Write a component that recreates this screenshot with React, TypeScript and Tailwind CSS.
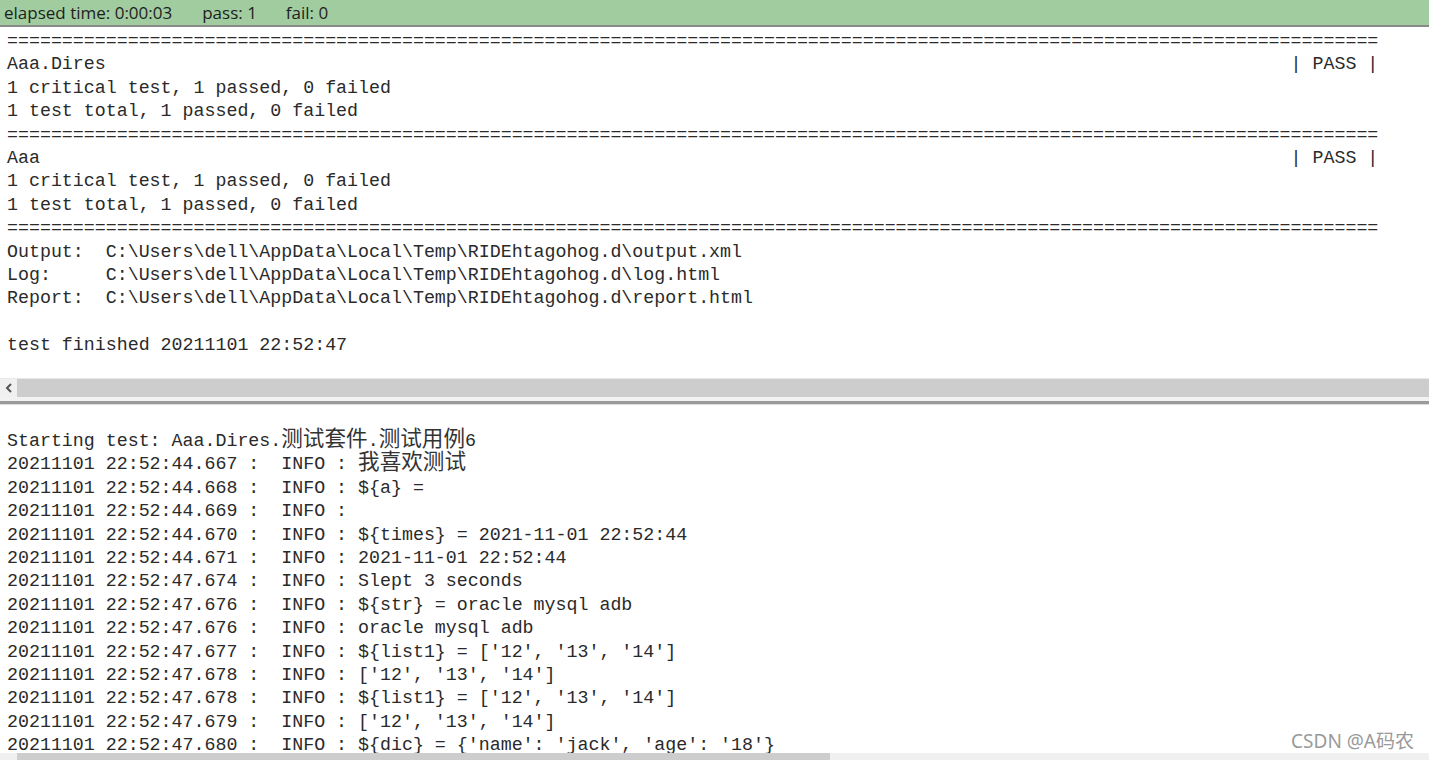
import React from "react";

const eq = "=".repeat(125);

const topLines: string[] = [
  eq,
  "Aaa.Dires".padEnd(117) + "| PASS |",
  "1 critical test, 1 passed, 0 failed",
  "1 test total, 1 passed, 0 failed",
  eq,
  "Aaa".padEnd(117) + "| PASS |",
  "1 critical test, 1 passed, 0 failed",
  "1 test total, 1 passed, 0 failed",
  eq,
  "Output:  C:\\Users\\dell\\AppData\\Local\\Temp\\RIDEhtagohog.d\\output.xml",
  "Log:     C:\\Users\\dell\\AppData\\Local\\Temp\\RIDEhtagohog.d\\log.html",
  "Report:  C:\\Users\\dell\\AppData\\Local\\Temp\\RIDEhtagohog.d\\report.html",
  "",
  "test finished 20211101 22:52:47",
];

const logLines: string[] = [
  "Starting test: Aaa.Dires.测试套件.测试用例6",
  "20211101 22:52:44.667 :  INFO : 我喜欢测试",
  "20211101 22:52:44.668 :  INFO : ${a} =",
  "20211101 22:52:44.669 :  INFO :",
  "20211101 22:52:44.670 :  INFO : ${times} = 2021-11-01 22:52:44",
  "20211101 22:52:44.671 :  INFO : 2021-11-01 22:52:44",
  "20211101 22:52:47.674 :  INFO : Slept 3 seconds",
  "20211101 22:52:47.676 :  INFO : ${str} = oracle mysql adb",
  "20211101 22:52:47.676 :  INFO : oracle mysql adb",
  "20211101 22:52:47.677 :  INFO : ${list1} = ['12', '13', '14']",
  "20211101 22:52:47.678 :  INFO : ['12', '13', '14']",
  "20211101 22:52:47.678 :  INFO : ${list1} = ['12', '13', '14']",
  "20211101 22:52:47.679 :  INFO : ['12', '13', '14']",
  "20211101 22:52:47.680 :  INFO : ${dic} = {'name': 'jack', 'age': '18'}",
];

const LogLine = ({ text }: { text: string }) => {
  const parts = text.split(/([\u4e00-\u9fff]+)/);
  return (
    <div className="h-[23.4px] leading-[23.4px] whitespace-pre">
      {parts.map((p, i) =>
        /[\u4e00-\u9fff]/.test(p) ? (
          <span
            key={i}
            className="text-[21.6px] leading-[0] text-[#333] [font-family:'Noto_Sans_CJK_SC',sans-serif]"
          >
            {p}
          </span>
        ) : (
          <span key={i}>{p}</span>
        )
      )}
    </div>
  );
};

export default function App() {
  return (
    <div className="relative w-[1429px] h-[760px] overflow-hidden bg-white flex flex-col">
      {/* status bar */}
      <div className="h-[27px] shrink-0 bg-[#a0cc9f] border-b-2 border-[#8a8a8a] flex items-center pl-[4px] text-[17px] text-[#1e1e1e] [font-family:'Open_Sans','Noto_Sans',sans-serif]">
        <span>elapsed time: 0:00:03</span>
        <span className="ml-[30px]">pass: 1</span>
        <span className="ml-[29px]">fail: 0</span>
      </div>

      {/* summary pane */}
      <div className="h-[351px] shrink-0 pt-[3px] pl-[7px] text-[18.3px] text-[#2a2a2a] [font-family:'Liberation_Mono','Noto_Sans_CJK_SC',monospace]">
        {topLines.map((l, i) => (
          <LogLine key={i} text={l} />
        ))}
      </div>

      {/* horizontal scrollbar */}
      <div className="h-[19px] shrink-0 flex border-t border-[#e8e8e8]">
        <div className="w-[17px] bg-[#f0f0f0] flex items-center justify-center">
          <svg width="8" height="10" viewBox="0 0 8 10">
            <path d="M6 1 L2 5 L6 9" fill="none" stroke="#555" strokeWidth="2" />
          </svg>
        </div>
        <div className="flex-1 bg-[#cdcdcd]" />
      </div>

      {/* splitter */}
      <div className="h-[4px] shrink-0 bg-[#f2f2f2]" />
      <div className="h-[3px] shrink-0 bg-[#9a9a9a]" />
      <div className="h-[1px] shrink-0 bg-[#dcdcdc]" />

      {/* log pane */}
      <div className="flex-1 flex flex-col overflow-hidden">
        <div className="pt-[25px] pl-[7px] text-[18.3px] text-[#2a2a2a] [font-family:'Liberation_Mono','Noto_Sans_CJK_SC',monospace]">
          {logLines.map((l, i) => (
            <LogLine key={i} text={l} />
          ))}
        </div>
        <div className="h-[17px] shrink-0 -mt-[4px] flex bg-[#f0f0f0]">
          <div className="w-[17px]" />
          <div className="w-[813px] bg-[#cdcdcd]" />
        </div>
      </div>

      <div className="absolute right-[15px] bottom-[5px] text-[19px] text-[#9a9a9a] [font-family:'Noto_Sans','Noto_Sans_CJK_SC',sans-serif]">
        CSDN @A码农
      </div>
    </div>
  );
}
